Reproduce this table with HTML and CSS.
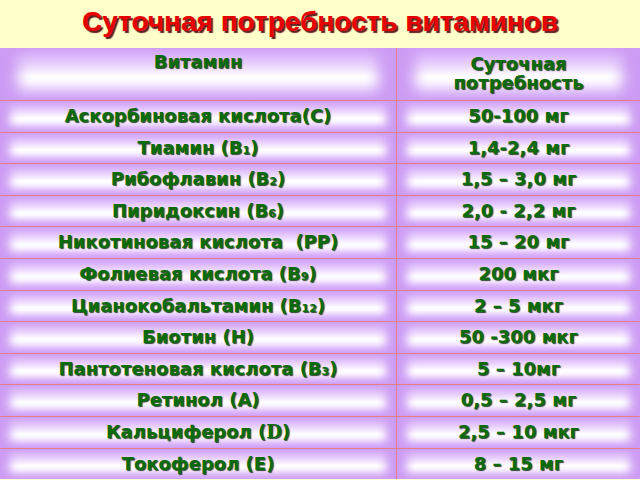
FILE: index.html
```html
<!DOCTYPE html>
<html lang="ru">
<head>
<meta charset="utf-8">
<title>Суточная потребность витаминов</title>
<link rel="stylesheet" href="styles.css">
</head>
<body>
<h1 class="title">Суточная потребность витаминов</h1>
<div class="grid">
  <div class="cell head">Витамин</div>
  <div class="cell head">Суточная<br>потребность</div>

  <div class="cell">Аскорбиновая кислота(С)</div>
  <div class="cell">50-100 мг</div>
  <div class="cell">Тиамин (В<span class="sub">1</span>)</div>
  <div class="cell">1,4-2,4 мг</div>
  <div class="cell">Рибофлавин (В<span class="sub">2</span>)</div>
  <div class="cell">1,5 – 3,0 мг</div>
  <div class="cell">Пиридоксин (В<span class="sub">6</span>)</div>
  <div class="cell">2,0 - 2,2 мг</div>
  <div class="cell">Никотиновая кислота &nbsp;(РР)</div>
  <div class="cell">15 – 20 мг</div>
  <div class="cell">Фолиевая кислота (В<span class="sub">9</span>)</div>
  <div class="cell">200 мкг</div>
  <div class="cell">Цианокобальтамин (В<span class="sub">12</span>)</div>
  <div class="cell">2 – 5 мкг</div>
  <div class="cell">Биотин (Н)</div>
  <div class="cell">50 -300 мкг</div>
  <div class="cell">Пантотеновая кислота (В<span class="sub">3</span>)</div>
  <div class="cell">5 – 10мг</div>
  <div class="cell">Ретинол (А)</div>
  <div class="cell">0,5 – 2,5 мг</div>
  <div class="cell">Кальциферол (<span class="serif">D</span>)</div>
  <div class="cell">2,5 – 10 мкг</div>
  <div class="cell">Токоферол (Е)</div>
  <div class="cell">8 – 15 мг</div>
</div>
</body>
</html>
```

FILE: styles.css
```css
html, body {
  margin: 0;
  padding: 0;
}
body {
  width: 640px;
  height: 480px;
  overflow: hidden;
  background: #ffffcc;
  font-family: "DejaVu Sans", "Noto Sans", sans-serif;
}
.title {
  margin: 0;
  height: 48px;
  line-height: 44px;
  text-align: center;
  font-family: "Liberation Sans", Arial, sans-serif;
  font-weight: bold;
  font-size: 28px;
  color: #e60000;
  text-shadow: 2px 2px 1px #5a2020;
}
.grid {
  display: grid;
  grid-template-columns: 396px 1fr;
  grid-template-rows: 52px repeat(12, 30.6px);
  gap: 1px;
  background: #e27f8c;
  width: 640px;
}
.cell {
  background: linear-gradient(to bottom, #d2a4f8 0%, #e6cbfc 28%, #ffffff 55%, #fbf6ff 65%, #e2c4fb 84%, #d0a2f6 100%);
  box-shadow: inset 13px 0 10px -3px #cc9cf4, inset -13px 0 10px -3px #cc9cf4;
  text-align: center;
  font-weight: bold;
  font-size: 18px;
  line-height: 20px;
  padding-top: 5px;
  box-sizing: border-box;
  color: #0a6c0a;
  text-shadow: 1px 1px 1px rgba(0, 25, 0, 0.8);
  white-space: nowrap;
}
.head {
  padding-top: 4px;
  line-height: 19px;
  box-shadow: inset 22px 0 14px -4px #cc9cf4, inset -22px 0 14px -4px #cc9cf4;
}
.head + .head {
  padding-top: 6px;
}
.sub {
  font-size: 11px;
}
.serif {
  font-family: "DejaVu Serif", serif;
}
```
